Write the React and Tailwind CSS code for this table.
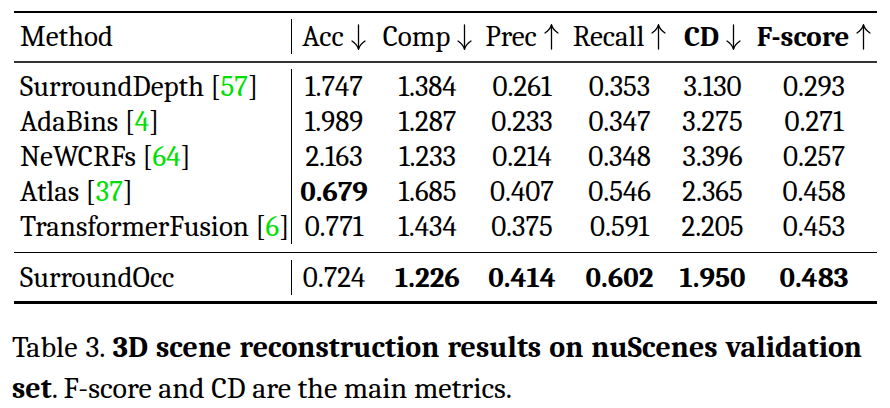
import React from "react";

const cols = "grid grid-cols-[278px_84px_103px_86px_109px_77px_126px]";

function Arrow({ up }) {
  return (
    <svg width="15" height="26" viewBox="0 0 15 26" className="inline-block align-[-4px] ml-[7px]">
      {up ? (
        <g fill="none" stroke="#000" strokeWidth="1.3" strokeLinecap="round">
          <path d="M7.5 1 L7.5 25" />
          <path d="M7.5 1 C6.5 4 4 7 1 9" />
          <path d="M7.5 1 C8.5 4 11 7 14 9" />
        </g>
      ) : (
        <g fill="none" stroke="#000" strokeWidth="1.3" strokeLinecap="round">
          <path d="M7.5 1 L7.5 25" />
          <path d="M7.5 25 C6.5 22 4 19 1 17" />
          <path d="M7.5 25 C8.5 22 11 19 14 17" />
        </g>
      )}
    </svg>
  );
}

const rows = [
  { name: "SurroundDepth", cite: "57", v: ["1.747", "1.384", "0.261", "0.353", "3.130", "0.293"] },
  { name: "AdaBins", cite: "4", v: ["1.989", "1.287", "0.233", "0.347", "3.275", "0.271"] },
  { name: "NeWCRFs", cite: "64", v: ["2.163", "1.233", "0.214", "0.348", "3.396", "0.257"] },
  { name: "Atlas", cite: "37", v: ["0.679", "1.685", "0.407", "0.546", "2.365", "0.458"], bold: [0] },
  { name: "TransformerFusion", cite: "6", v: ["0.771", "1.434", "0.375", "0.591", "2.205", "0.453"] },
];

function Row({ name, cite, v, bold = [] }) {
  return (
    <div className={cols + " h-[35px] leading-[35px]"}>
      <div className="pl-[6px] border-r border-black whitespace-nowrap">
        {name}
        {cite && (
          <>
            {" "}[<span className="text-[#00e000]">{cite}</span>]
          </>
        )}
      </div>
      {v.map((x, i) => (
        <div key={i} className={"text-center " + (bold.includes(i) ? "font-bold" : "")}>
          {x}
        </div>
      ))}
    </div>
  );
}

export default function App() {
  return (
    <div className="w-[890px] h-[408px] bg-white text-black overflow-hidden font-serif">
      <div className="ml-[14px] w-[863px] pt-[11px] text-[29px]">
        <div className="h-[2px] bg-black" />
        <div className="h-[6px]" />
        <div className={cols + " h-[35px] leading-[35px] whitespace-nowrap"}>
          <div className="pl-[6px] border-r border-black">Method</div>
          <div className="text-center">Acc<Arrow /></div>
          <div className="text-center">Comp<Arrow /></div>
          <div className="text-center">Prec<Arrow up /></div>
          <div className="text-center">Recall<Arrow up /></div>
          <div className="text-center font-bold">CD<Arrow /></div>
          <div className="text-center"><span className="font-bold">F-score</span><Arrow up /></div>
        </div>
        <div className="h-[7px]" />
        <div className="h-[2px] bg-[#333]" />
        <div className="h-[6px]" />
        {rows.map((r) => (
          <Row key={r.name} {...r} />
        ))}
        <div className="h-[8px]" />
        <div className="h-[1px] bg-black" />
        <div className="h-[7px]" />
        <Row name="SurroundOcc" v={["0.724", "1.226", "0.414", "0.602", "1.950", "0.483"]} bold={[1, 2, 3, 4, 5]} />
        <div className="h-[6px]" />
        <div className="h-[3px] bg-black" />
      </div>
      <p className="ml-[12px] mt-[23px] w-[850px] text-[30px] leading-[41px] text-justify">
        Table 3. <span className="font-bold">3D scene reconstruction results on nuScenes validation set</span>. F-score and CD are the main metrics.
      </p>
    </div>
  );
}
